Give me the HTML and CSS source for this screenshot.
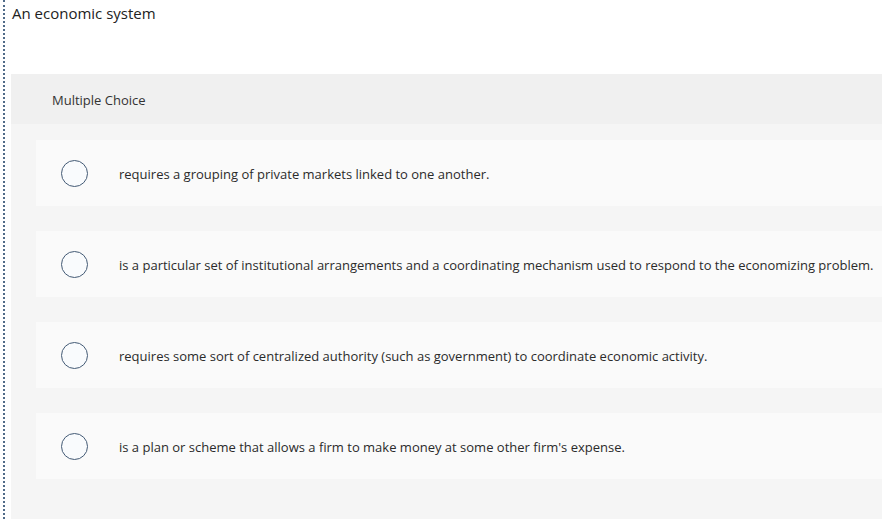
FILE: index.html
```html
<!DOCTYPE html>
<html>
<head>
<meta charset="utf-8">
<link rel="stylesheet" href="styles.css">
</head>
<body>
<div class="question">
  <div class="prompt">An economic system</div>
  <div class="panel">
    <div class="panel-head">Multiple Choice</div>
    <div class="options">
      <div class="option"><span class="radio"></span><span class="label">requires a grouping of private markets linked to one another.</span></div>
      <div class="option"><span class="radio"></span><span class="label">is a particular set of institutional arrangements and a coordinating mechanism used to respond to the economizing problem.</span></div>
      <div class="option"><span class="radio"></span><span class="label">requires some sort of centralized authority (such as government) to coordinate economic activity.</span></div>
      <div class="option"><span class="radio"></span><span class="label">is a plan or scheme that allows a firm to make money at some other firm's expense.</span></div>
    </div>
  </div>
</div>
</body>
</html>
```
FILE: styles.css
```css
html, body {
  margin: 0;
  padding: 0;
  background: #ffffff;
}
body {
  font-family: "Open Sans", "Liberation Sans", sans-serif;
  color: #2b2b2b;
}
.question {
  margin-left: 3px;
  border-left: 2px dotted #4f6a88;
  padding-left: 6px;
  height: 519px;
  box-sizing: border-box;
  padding-top: 4px;
}
.prompt {
  font-size: 15px;
  line-height: 18px;
  height: 70px;
  padding-left: 1px;
  color: #222;
}
.panel {
  background: #f5f5f5;
  height: 445px;
}
.panel-head {
  background: #f0f0f0;
  height: 50px;
  box-sizing: border-box;
  padding: 17px 0 0 41px;
  font-size: 13px;
  color: #333;
}
.options {
  display: flex;
  flex-direction: column;
  gap: 25px;
  padding: 16px 0 0 25px;
}
.option {
  background: #fafafa;
  height: 66px;
  display: flex;
  align-items: center;
}
.radio {
  width: 25px;
  height: 25px;
  border: 1.5px solid #435a75;
  border-radius: 50%;
  background: #f9fbfd;
  margin-left: 25px;
  flex: none;
}
.label {
  margin-left: 31px;
  font-size: 13px;
  color: #2b2b2b;
  white-space: nowrap;
  position: relative;
  top: 1px;
}
```
